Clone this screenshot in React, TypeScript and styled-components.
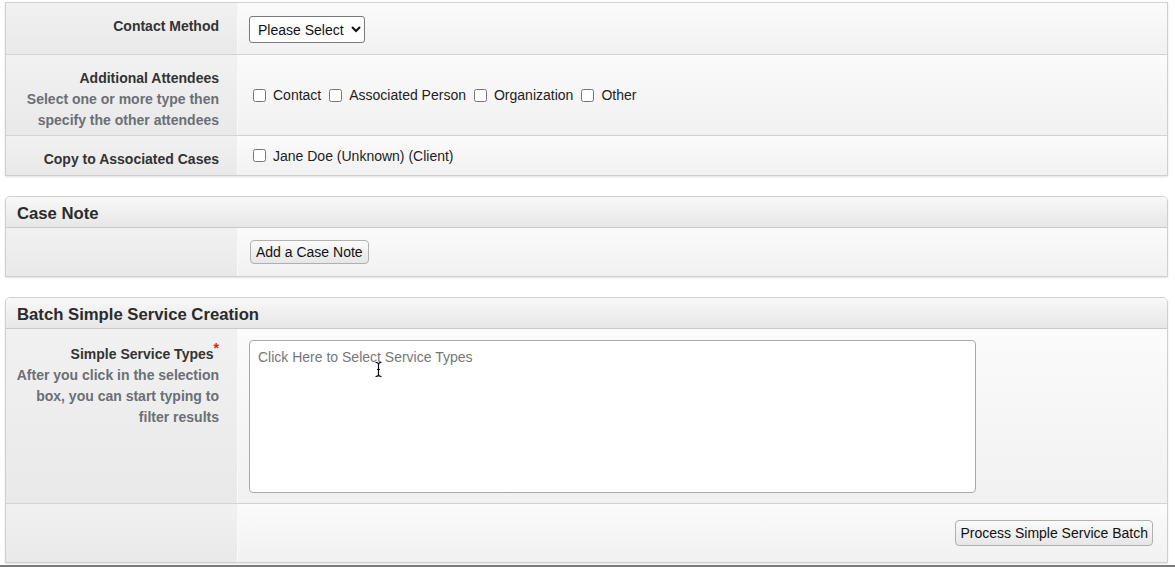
import React from "react";
import styled, { createGlobalStyle } from "styled-components";

const GlobalStyle = createGlobalStyle`
  body {
    margin: 0;
    background: #ffffff;
    font-family: "Liberation Sans", Arial, Helvetica, sans-serif;
    color: #222;
  }
`;

function App() {
  return (
    <>
      <GlobalStyle />
      <Page>
        <Panel $cut>
          <Row $h={51}>
            <LabelCell>Contact Method</LabelCell>
            <ContentCell>
              <Select defaultValue="">
                <option value="">Please Select</option>
                <option>Phone</option>
                <option>Email</option>
                <option>In Person</option>
              </Select>
            </ContentCell>
          </Row>
          <Row $h={80}>
            <LabelCell>
              Additional Attendees
              <Hint>Select one or more type then specify the other attendees</Hint>
            </LabelCell>
            <ContentCell>
              <CheckLabel>
                <input type="checkbox" />Contact
              </CheckLabel>
              <CheckLabel>
                <input type="checkbox" />Associated Person
              </CheckLabel>
              <CheckLabel>
                <input type="checkbox" />Organization
              </CheckLabel>
              <CheckLabel>
                <input type="checkbox" />Other
              </CheckLabel>
            </ContentCell>
          </Row>
          <Row $h={39}>
            <LabelCell>Copy to Associated Cases</LabelCell>
            <ContentCell>
              <CheckLabel>
                <input type="checkbox" />Jane Doe (Unknown) (Client)
              </CheckLabel>
            </ContentCell>
          </Row>
        </Panel>

        <Panel>
          <PanelHeader>Case Note</PanelHeader>
          <Row $h={48}>
            <LabelCell />
            <ContentCell>
              <Button type="button">Add a Case Note</Button>
            </ContentCell>
          </Row>
        </Panel>

        <Panel>
          <PanelHeader>Batch Simple Service Creation</PanelHeader>
          <Row $h={174}>
            <LabelCell $top={15}>
              Simple Service Types<Required>*</Required>
              <Hint>
                After you click in the selection box, you can start typing to
                filter results
              </Hint>
            </LabelCell>
            <ContentCell>
              <TextBox>
                <Placeholder>Click Here to Select Service Types</Placeholder>
                <Cursor width="7" height="15" viewBox="0 0 7 15">
                  <path
                    d="M0.5 0.5 Q3.5 0.5 3.5 2.5 L3.5 12.5 Q3.5 14.5 0.5 14.5 M6.5 0.5 Q3.5 0.5 3.5 2.5 M3.5 12.5 Q3.5 14.5 6.5 14.5 M2 7.5 L5 7.5"
                    fill="none"
                    stroke="#111"
                    strokeWidth="1.2"
                  />
                </Cursor>
              </TextBox>
            </ContentCell>
          </Row>
          <Row $h={58}>
            <LabelCell />
            <ContentCell $end>
              <Button type="button" $tall>
                Process Simple Service Batch
              </Button>
            </ContentCell>
          </Row>
        </Panel>
        <BottomRule />
      </Page>
    </>
  );
}

export default App;

const Page = styled.div`
  padding: 2px 7px 0 5px;
`;

const Panel = styled.section<{ $cut?: boolean }>`
  border: 1px solid #cfcfcf;
  border-radius: ${(props) => (props.$cut ? "0" : "5px 5px 0 0")};
  box-shadow: 0 1px 2px rgba(0, 0, 0, 0.12);
  margin-top: ${(props) => (props.$cut ? "0" : "20px")};
  overflow: hidden;
`;

const PanelHeader = styled.h3`
  margin: 0;
  height: 31px;
  box-sizing: border-box;
  display: flex;
  align-items: center;
  padding: 3px 0 0 11px;
  font-size: 16.7px;
  font-weight: bold;
  color: #2b2b2b;
  background: linear-gradient(#f8f8f8, #e7e7e7);
  border-bottom: 1px solid #c9c9c9;
`;

const Row = styled.div<{ $h: number }>`
  display: grid;
  grid-template-columns: 232px 1fr;
  min-height: ${(props) => props.$h}px;
  & + & {
    border-top: 1px solid #d3d3d3;
  }
`;

const LabelCell = styled.div<{ $top?: number }>`
  padding: ${(props) => props.$top ?? 13}px 18px 0 4px;
  text-align: right;
  font-size: 14px;
  font-weight: bold;
  line-height: 21px;
  color: #333;
  background: linear-gradient(#f1f1f1, #e9e9e9);
  border-right: 1px solid #f9f9f9;
`;

const Hint = styled.div`
  color: #6b6f75;
`;

const Required = styled.sup`
  color: #e01b1b;
  font-size: 14px;
  line-height: 0;
`;

const ContentCell = styled.div<{ $end?: boolean }>`
  display: flex;
  align-items: center;
  justify-content: ${(props) => (props.$end ? "flex-end" : "flex-start")};
  flex-wrap: wrap;
  padding: ${(props) => (props.$end ? "0 14px 0 11px" : "0 11px")};
  background: linear-gradient(#fbfbfb, #f1f1f1);
`;

const Select = styled.select`
  width: 116px;
  height: 27px;
  font-family: "Liberation Sans", Arial, sans-serif;
  font-size: 14px;
  color: #111;
  background: #fff;
  border: 1px solid #7a7a7a;
  border-radius: 3px;
  padding: 0 4px;
  margin-top: 2px;
`;

const CheckLabel = styled.label`
  display: inline-flex;
  align-items: center;
  font-size: 14px;
  color: #222;
  margin-right: 4px;
  white-space: pre;
  input {
    width: 13px;
    height: 13px;
    margin: 0 7px 0 4px;
  }
`;

const Button = styled.button<{ $tall?: boolean }>`
  font-family: "Liberation Sans", Arial, sans-serif;
  font-size: 14px;
  line-height: 16px;
  color: #111;
  padding: ${(props) => (props.$tall ? "4px 4px" : "3px 5px")};
  border: 1px solid #b0b0b0;
  border-radius: 4px;
  background: linear-gradient(#fbfbfb, #e6e6e6);
  margin-left: 1px;
`;

const TextBox = styled.div`
  position: relative;
  box-sizing: border-box;
  width: 727px;
  height: 153px;
  background: #fff;
  border: 1px solid #a9a9a9;
  border-radius: 4px;
  padding: 7px 8px;
`;

const Placeholder = styled.span`
  font-size: 14px;
  color: #777;
`;

const Cursor = styled.svg`
  position: absolute;
  left: 125px;
  top: 21px;
`;

const BottomRule = styled.div`
  margin: 2px -7px 0 -5px;
  height: 2px;
  background: #7a7a7a;
`;
